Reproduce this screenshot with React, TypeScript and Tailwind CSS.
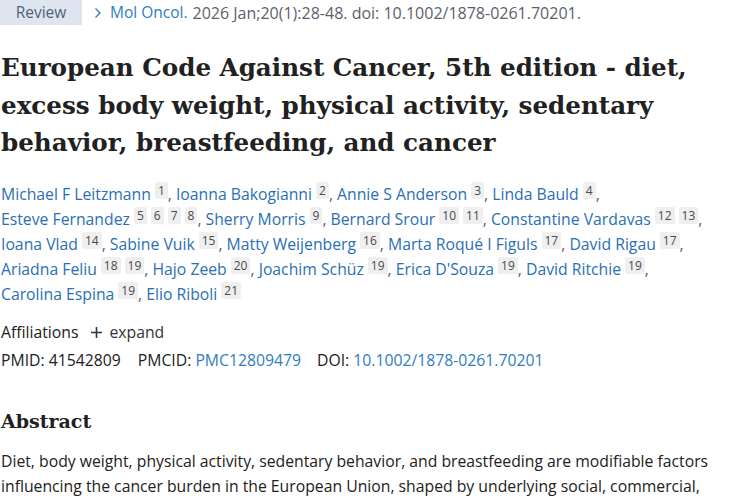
import React from "react";

interface IAuthor {
  name: string;
  affs: number[];
}

const authors: IAuthor[] = [
  { name: "Michael F Leitzmann", affs: [1] },
  { name: "Ioanna Bakogianni", affs: [2] },
  { name: "Annie S Anderson", affs: [3] },
  { name: "Linda Bauld", affs: [4] },
  { name: "Esteve Fernandez", affs: [5, 6, 7, 8] },
  { name: "Sherry Morris", affs: [9] },
  { name: "Bernard Srour", affs: [10, 11] },
  { name: "Constantine Vardavas", affs: [12, 13] },
  { name: "Ioana Vlad", affs: [14] },
  { name: "Sabine Vuik", affs: [15] },
  { name: "Matty Weijenberg", affs: [16] },
  { name: "Marta Roqué I Figuls", affs: [17] },
  { name: "David Rigau", affs: [17] },
  { name: "Ariadna Feliu", affs: [18, 19] },
  { name: "Hajo Zeeb", affs: [20] },
  { name: "Joachim Schüz", affs: [19] },
  { name: "Erica D'Souza", affs: [19] },
  { name: "David Ritchie", affs: [19] },
  { name: "Carolina Espina", affs: [19] },
  { name: "Elio Riboli", affs: [21] },
];

const sans = "font-['Segoe_UI','Open_Sans','Noto_Sans',sans-serif]";
const serif = "font-['Charter','DejaVu_Serif','Liberation_Serif',serif]";

const App = () => {
  return (
    <div className={`w-[750px] h-[500px] overflow-hidden bg-white ${sans}`}>
      <div className="w-[716px] pl-[1px]">
        {/* heading */}
        <div className="flex items-center h-[25px] text-[15.5px]">
          <span className="h-[25px] w-[82px] flex items-center justify-center bg-[#dfe5ee] text-[#4f6278] -ml-[1px]">
            Review
          </span>
          <span className="ml-[11px] text-[#2f7dc0] flex items-center">
            <svg width="10" height="14" viewBox="0 0 10 14" className="mr-[7px]">
              <path d="M2.5 2.5 L7 7 L2.5 11.5" fill="none" stroke="currentColor" strokeWidth="1.4" />
            </svg>
            Mol Oncol.
          </span>
          <span className="ml-[5px] text-[#5b616b] text-[16px]">2026 Jan;20(1):28-48. doi: 10.1002/1878-0261.70201.</span>
        </div>

        <h1 className={`${serif} mt-[24px] text-[24.6px] leading-[37.5px] font-bold text-[#212121]`}>
          European Code Against Cancer, 5th edition - diet,
          <br />
          excess body weight, physical activity, sedentary
          <br />
          behavior, breastfeeding, and cancer
        </h1>

        {/* authors */}
        <div className="mt-[20px] text-[15.75px] leading-[25px] text-[#2a6fb5]">
          {authors.map((a, i) => (
            <React.Fragment key={i}>
              <span className="whitespace-nowrap">
                {a.name}
                {a.affs.map((n) => (
                  <span
                    key={n}
                    className="relative -top-[5px] ml-[4px] inline-block px-[3px] leading-[17px] text-[12px] bg-[#efefef] text-[#4a4a4a] rounded-[2px]"
                  >
                    {n}
                  </span>
                ))}
                {i < authors.length - 1 && <span className="text-[#5b616b]">,</span>}
              </span>{" "}
            </React.Fragment>
          ))}
        </div>

        <div className="mt-[13px] flex items-center text-[15.75px] leading-[25px] text-[#212121]">
          Affiliations
          <span className="ml-[12px] flex items-center text-[#333]">
            <svg width="13" height="13" viewBox="0 0 13 13" className="mr-[6px]">
              <path d="M6.5 1 V12 M1 6.5 H12" stroke="currentColor" strokeWidth="1.6" />
            </svg>
            expand
          </span>
        </div>

        <div className="mt-[3px] flex text-[15.75px] leading-[25px] text-[#212121]">
          <span>PMID: 41542809</span>
          <span className="ml-[17px]">
            PMCID: <span className="text-[#2f7dc0]">PMC12809479</span>
          </span>
          <span className="ml-[16px]">
            DOI: <span className="text-[#2f7dc0]">10.1002/1878-0261.70201</span>
          </span>
        </div>

        <h2 className={`${serif} mt-[33px] text-[19px] leading-[30px] font-bold text-[#212121]`}>Abstract</h2>

        <p className="mt-[13px] text-[15.75px] leading-[25px] text-[#212121]">
          Diet, body weight, physical activity, sedentary behavior, and breastfeeding are modifiable factors
          influencing the cancer burden in the European Union, shaped by underlying social, commercial,
          environmental, and economic determinants.
        </p>
      </div>
    </div>
  );
};

export default App;
